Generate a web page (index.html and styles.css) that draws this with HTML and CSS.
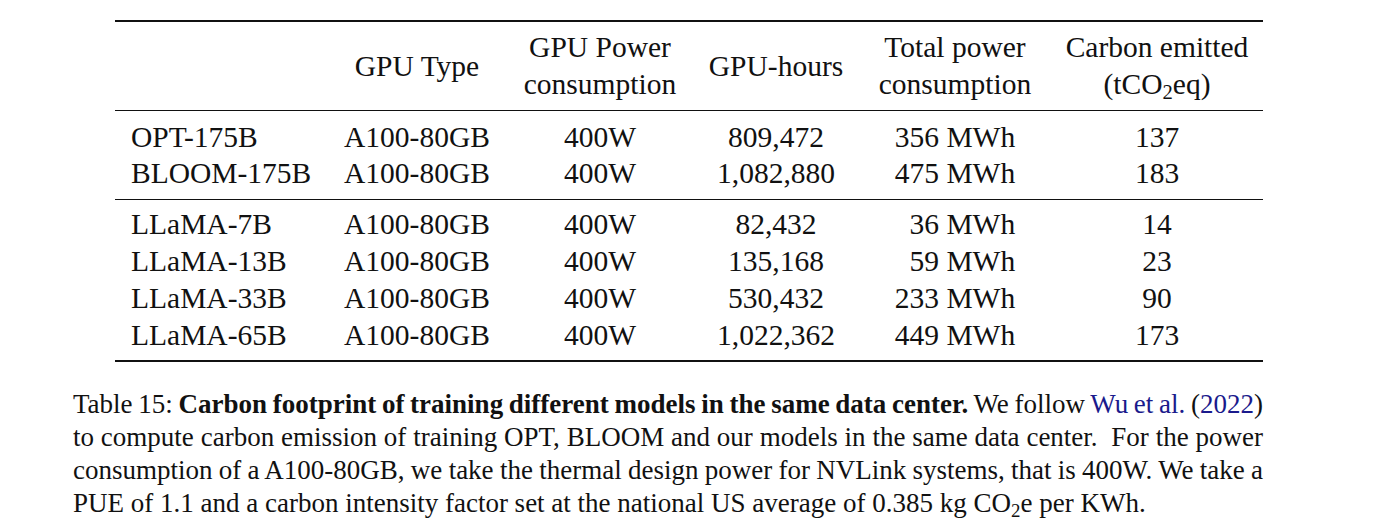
FILE: index.html
```html
<!DOCTYPE html>
<html>
<head>
<meta charset="utf-8">
<link rel="stylesheet" href="styles.css">
</head>
<body>
<div class="page">
  <table class="tbl">
    <colgroup>
      <col class="c1"><col class="c2"><col class="c3"><col class="c4"><col class="c5"><col class="c6">
    </colgroup>
    <thead>
      <tr>
        <th></th>
        <th>GPU Type</th>
        <th>GPU Power<br>consumption</th>
        <th>GPU-hours</th>
        <th>Total power<br>consumption</th>
        <th>Carbon emitted<br>(tCO<sub>2</sub>eq)</th>
      </tr>
    </thead>
    <tbody class="g1">
      <tr><td>OPT-175B</td><td>A100-80GB</td><td>400W</td><td>809,472</td><td>356 MWh</td><td>137</td></tr>
      <tr><td>BLOOM-175B</td><td>A100-80GB</td><td>400W</td><td>1,082,880</td><td>475 MWh</td><td>183</td></tr>
    </tbody>
    <tbody class="g2">
      <tr><td>LLaMA-7B</td><td>A100-80GB</td><td>400W</td><td>82,432</td><td>&nbsp;&nbsp;36 MWh</td><td>14</td></tr>
      <tr><td>LLaMA-13B</td><td>A100-80GB</td><td>400W</td><td>135,168</td><td>&nbsp;&nbsp;59 MWh</td><td>23</td></tr>
      <tr><td>LLaMA-33B</td><td>A100-80GB</td><td>400W</td><td>530,432</td><td>233 MWh</td><td>90</td></tr>
      <tr><td>LLaMA-65B</td><td>A100-80GB</td><td>400W</td><td>1,022,362</td><td>449 MWh</td><td>173</td></tr>
    </tbody>
  </table>
  <div class="caption">
    <div class="ln just">Table 15: <b>Carbon footprint of training different models in the same data center.</b> We follow <span class="cite">Wu et al.</span> (<span class="cite">2022</span>)</div>
    <div class="ln just">to compute carbon emission of training OPT, BLOOM and our models in the same data center.&nbsp; For the power</div>
    <div class="ln just">consumption of a A100-80GB, we take the thermal design power for NVLink systems, that is 400W. We take a</div>
    <div class="ln">PUE of 1.1 and a carbon intensity factor set at the national US average of 0.385 kg CO<sub>2</sub>e per KWh.</div>
  </div>
</div>
</body>
</html>
```
FILE: styles.css
```css
html, body {
  margin: 0;
  padding: 0;
  background: #fff;
}
body {
  font-family: "Liberation Serif", "Times New Roman", serif;
  color: #111;
}
.page {
  padding: 20px 0 0 73px;
  width: 1190px;
}
.tbl {
  margin-left: 42px;
  width: 1148px;
  font-size: 29.5px;
  table-layout: fixed;
  border-collapse: collapse;
  border-top: 2px solid #111;
  border-bottom: 2px solid #111;
}
.c1 { width: 212px; }
.c2 { width: 180px; }
.c3 { width: 186px; }
.c4 { width: 166px; }
.c5 { width: 192px; }
.c6 { width: 212px; }
.tbl th {
  font-weight: normal;
  line-height: 37px;
  padding: 7px 0;
  text-align: center;
}
.tbl thead {
  border-bottom: 1px solid #111;
}
.tbl td {
  padding: 0;
  text-align: center;
  white-space: nowrap;
}
.tbl td:first-child {
  text-align: left;
  padding-left: 16px;
}
.g1 {
  border-bottom: 1px solid #111;
}
.g1 td { line-height: 36px; }
.g1 tr:first-child td { padding-top: 8px; }
.g1 tr:last-child td { padding-bottom: 8px; }
.g2 td { line-height: 37px; }
.g2 tr:first-child td { padding-top: 6px; }
.g2 tr:last-child td { padding-bottom: 6px; }
sub {
  font-size: 0.7em;
  vertical-align: -0.25em;
  line-height: 0;
}
.caption {
  margin-top: 26px;
  font-size: 27px;
}
.ln {
  line-height: 33px;
  white-space: nowrap;
}
.ln.just {
  text-align: justify;
  text-align-last: justify;
  word-spacing: -2px;
}
.caption b { font-weight: bold; }
.cite { color: #1a1a8c; }
```
